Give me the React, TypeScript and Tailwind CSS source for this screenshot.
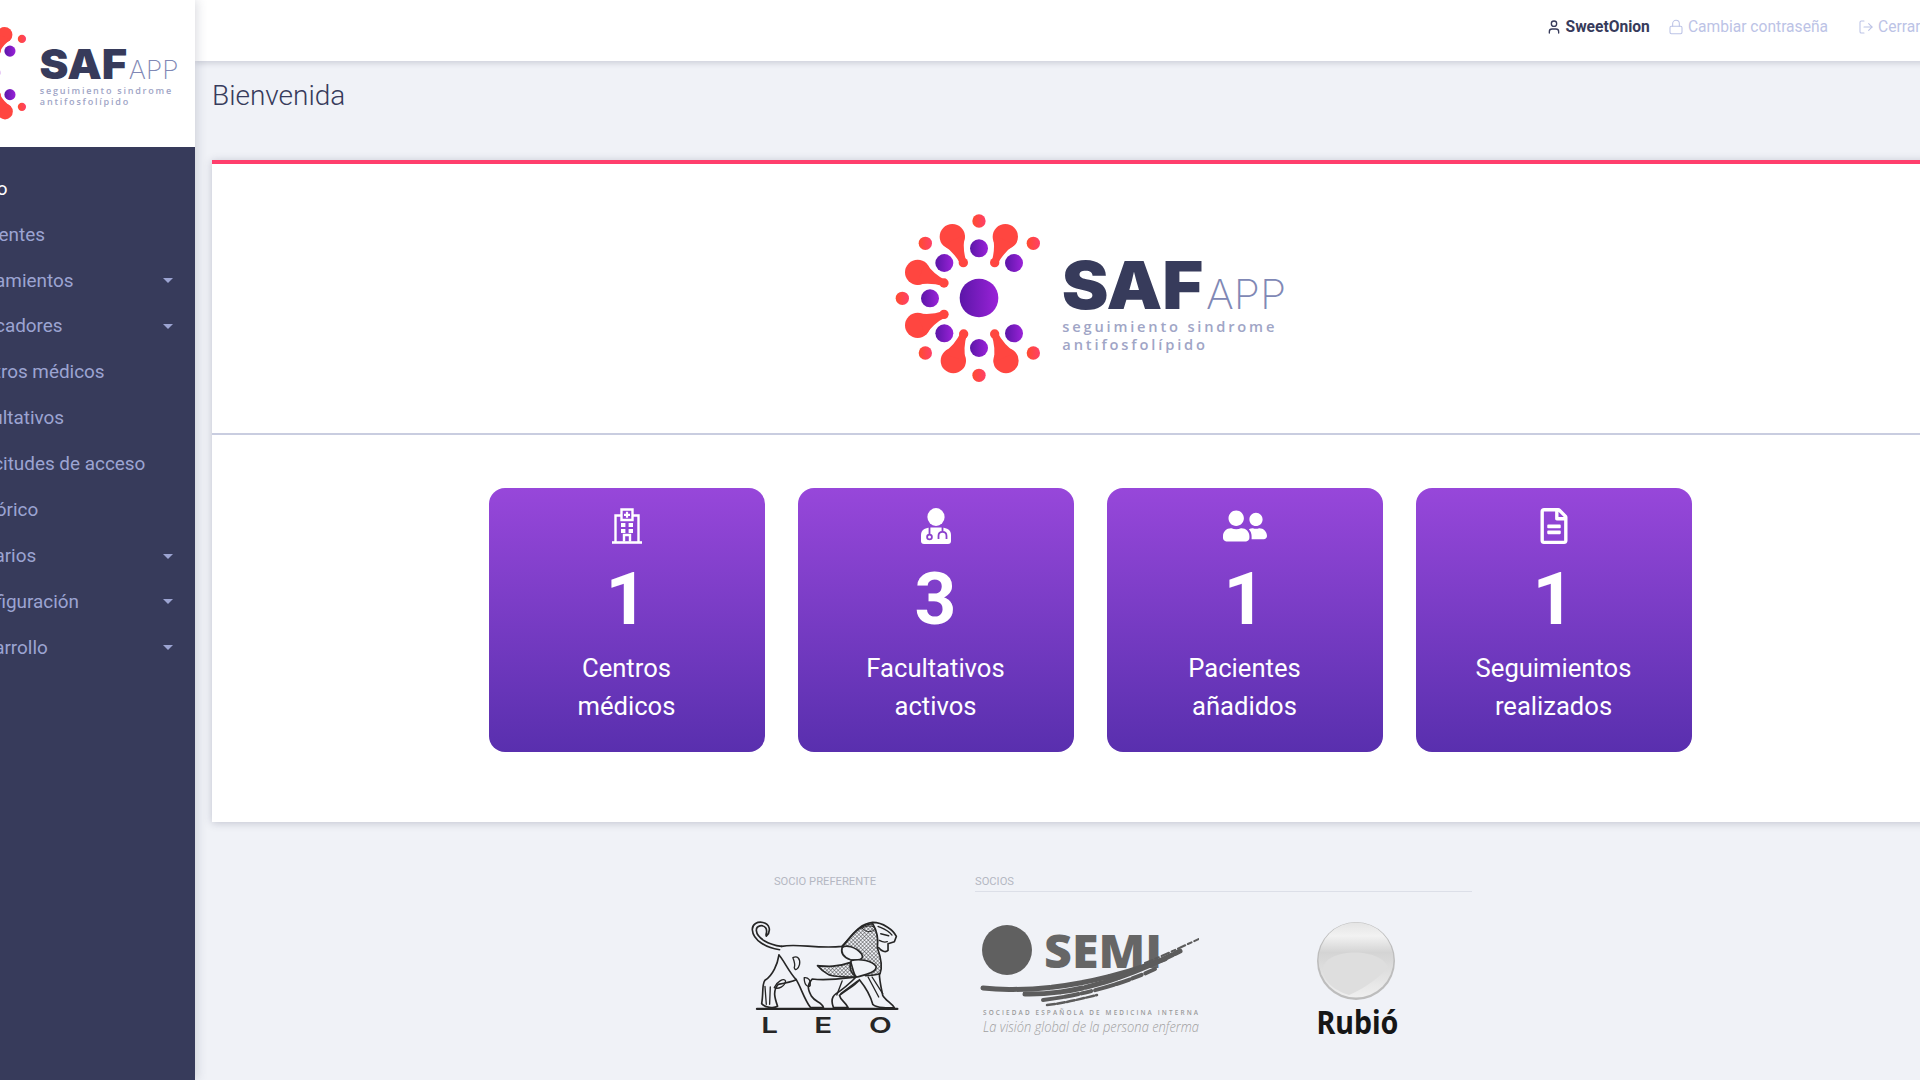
import { Lock, LogOut, User } from "lucide-react";
import { FaRegFileAlt, FaUserFriends } from "react-icons/fa";

const menu = [
  { label: "Inicio", active: true },
  { label: "Pacientes" },
  { label: "Tratamientos", caret: true },
  { label: "Marcadores", caret: true },
  { label: "Centros médicos" },
  { label: "Facultativos" },
  { label: "Solicitudes de acceso" },
  { label: "Histórico" },
  { label: "Usuarios", caret: true },
  { label: "Configuración", caret: true },
  { label: "Desarrollo", caret: true },
];

const blobs = [
  [217, 110, 250, 188],
  [376, 110, 344, 188],
  [113, 217, 192, 249],
  [113, 376, 192, 343],
  [220, 482, 251, 402],
  [378, 482, 344, 402],
];
const redDots = [
  [297, 63],
  [136, 130],
  [460, 130],
  [67, 295],
  [136, 459],
  [460, 459],
  [297, 526],
];
const purpleDots = [
  [297, 145],
  [193, 189],
  [402, 189],
  [150, 295],
  [193, 400],
  [402, 400],
  [297, 444],
];

// forma de "paleta": circulo grande, cuello y circulo pequeño
function blobPath(x1: number, y1: number, x2: number, y2: number) {
  const dx = x2 - x1;
  const dy = y2 - y1;
  const len = Math.hypot(dx, dy);
  const nx = -dy / len;
  const ny = dx / len;
  const mx = x1 + dx * 0.56;
  const my = y1 + dy * 0.56;
  const a = (s: number) => `${x1 + nx * 36 * s + dx * 0.12} ${y1 + ny * 36 * s + dy * 0.12}`;
  const b = (s: number) => `${x2 + nx * 10 * s} ${y2 + ny * 10 * s}`;
  return `M${a(1)} Q${mx + nx * 12} ${my + ny * 12} ${b(1)} L${b(-1)} Q${mx - nx * 12} ${my - ny * 12} ${a(-1)} Z`;
}

function SafLogo({ id, className }: { id: string; className: string }) {
  return (
    <svg viewBox="0 0 1260 600" className={className}>
      <defs>
        <linearGradient id={`${id}-red`} x1="0" x2="1" y1="0" y2="0">
          <stop offset="0" stopColor="#ff4b2e" />
          <stop offset="1" stopColor="#ff4068" />
        </linearGradient>
        <linearGradient id={`${id}-purple`} x1="0" x2="1" y1="0" y2="0">
          <stop offset="0" stopColor="#5b16a8" />
          <stop offset="1" stopColor="#9a22d8" />
        </linearGradient>
      </defs>
      {blobs.map(([x1, y1, x2, y2], i) => (
        <g key={i} fill="#ff4640">
          <circle cx={x1} cy={y1} r={38} />
          <circle cx={x2} cy={y2} r={14} />
          <path d={blobPath(x1, y1, x2, y2)} />
        </g>
      ))}
      {redDots.map(([x, y], i) => (
        <circle key={i} cx={x} cy={y} r={20} fill={`url(#${id}-red)`} />
      ))}
      {purpleDots.map(([x, y], i) => (
        <circle key={i} cx={x} cy={y} r={27} fill={`url(#${id}-purple)`} />
      ))}
      <circle cx={297} cy={294} r={58} fill={`url(#${id}-purple)`} />
      <text x={545} y={326} fontFamily="Inter, sans-serif" fontWeight={900} fontSize={198} fill="#373b5b" textLength={425} lengthAdjust="spacingAndGlyphs">
        SAF
      </text>
      <text x={978} y={326} fontFamily="Inter, sans-serif" fontWeight={200} fontSize={122} fill="#8088b5" textLength={240} lengthAdjust="spacingAndGlyphs">
        APP
      </text>
      <text x={547} y={397} fontFamily="'Open Sans', sans-serif" fontWeight={600} fontSize={44} fill="#a0a5c6" textLength={636}>
        seguimiento sindrome
      </text>
      <text x={547} y={450} fontFamily="'Open Sans', sans-serif" fontWeight={600} fontSize={44} fill="#a0a5c6" textLength={428}>
        antifosfolípido
      </text>
    </svg>
  );
}

function HospitalIcon() {
  return (
    <svg viewBox="0 0 32 36" className="h-[36px] w-[32px]" fill="none" stroke="white" strokeWidth="2.4">
      <path d="M1 34.5H31" strokeWidth="2.6" />
      <path d="M4.5 34V7.5H10.5M21.5 7.5H27.5V34" />
      <path d="M10.5 12V1.5H21.5V12H10.5Z" />
      <path d="M16 3.8V9.7M13 6.8H19" strokeWidth="2.2" />
      <path d="M13 33.5V27H19V33.5" />
      <g fill="white" stroke="none">
        <rect x="10" y="15" width="4.4" height="4" />
        <rect x="17.6" y="15" width="4.4" height="4" />
        <rect x="10" y="21" width="4.4" height="4" />
        <rect x="17.6" y="21" width="4.4" height="4" />
      </g>
    </svg>
  );
}

function DoctorIcon() {
  return (
    <svg viewBox="0 0 32 36" className="h-[36px] w-[32px]">
      <ellipse cx="16" cy="9" rx="8.6" ry="9" fill="white" />
      <path d="M1 33V27C1 22 5 20 10 19.5H22C27 20 31 22 31 27V33C31 35 30 36 28 36H4C2 36 1 35 1 33Z" fill="white" />
      <g fill="none" stroke="#8a40cc" strokeWidth="1.8">
        <path d="M9.5 19V26.5" />
        <circle cx="9.5" cy="29" r="2.4" />
        <path d="M22.5 19V23.5" />
        <path d="M18.5 31V28C18.5 25.5 20 23.8 22.5 23.8C25 23.8 26.5 25.5 26.5 28V31" />
      </g>
    </svg>
  );
}

function LeoLogo() {
  return (
    <svg viewBox="60 170 460 360" className="h-[120px] w-[153px]" fill="none" stroke="#262626" strokeWidth="5" strokeLinecap="round" strokeLinejoin="round">
      <defs>
        <pattern id="mane" width="8" height="8" patternUnits="userSpaceOnUse" patternTransform="rotate(45)">
          <path d="M0 0H8M0 0V8" stroke="#333" strokeWidth="2.6" />
        </pattern>
      </defs>
      {/* cola */}
      <path d="M152 268C112 262 72 240 70 208C69 190 86 183 102 186C122 190 128 212 112 227C108 222 118 214 110 202C102 192 82 194 82 210C84 234 118 252 158 258" />
      {/* lomo y cabeza */}
      <path d="M158 258C205 248 262 266 340 258C365 232 388 190 432 186C462 186 494 208 503 228L497 244L478 250L478 270C470 278 458 272 450 262" />
      {/* melena */}
      <path d="M340 258C365 232 388 192 432 190C444 210 450 232 446 262C456 290 462 320 454 340C440 345 420 345 410 346L385 300C360 298 345 285 340 258Z" fill="url(#mane)" />
      <path d="M340 262C350 252 380 258 398 280C410 300 385 300 365 298C348 292 335 280 340 262Z" fill="#f0f2f7" />
      <path d="M368 300C395 295 430 300 442 318C445 335 415 342 385 350C368 345 358 320 368 300Z" fill="#f0f2f7" />
      {/* detalle de la cara */}
      <path d="M448 198C462 204 478 208 490 224M456 220L480 226M452 240C462 246 470 246 476 244" strokeWidth="4" />
      <path d="M400 204C415 192 435 196 440 204C430 216 415 218 400 204Z" strokeWidth="3" />
      {/* ala */}
      <path d="M266 316C292 318 320 322 366 306C372 322 374 340 382 350C350 350 310 350 298 342C288 336 276 328 266 316Z" fill="url(#mane)" />
      {/* vientre y patas */}
      <path d="M150 284C146 310 132 345 108 360C98 372 104 400 98 430C108 442 135 445 146 438C138 415 130 392 148 372C170 368 188 364 202 358C218 385 225 415 245 442L284 442C280 425 258 425 248 408C238 390 232 375 250 356C300 362 360 352 382 350C360 372 345 385 322 400C304 412 310 432 314 442L358 442C350 425 335 420 332 405C350 390 380 375 392 358C410 380 425 405 432 432C445 444 480 444 497 442C488 428 470 420 462 405C458 385 452 360 452 340" />
      <path d="M150 284C165 300 180 335 202 358" />
      <path d="M192 292C205 285 215 295 212 312C208 328 198 332 196 322C200 312 196 302 192 292Z" strokeWidth="4" />
      <path d="M136 382C145 362 165 352 170 362C168 378 148 388 136 382Z" strokeWidth="4" />
      <path d="M226 352C238 350 248 362 244 376C236 382 226 374 226 352Z" strokeWidth="4" />
      <path d="M340 362L324 404M386 362L336 400M418 350L450 410M430 350L462 400" strokeWidth="4" />
      <path d="M108 378L112 432M124 380L122 432" strokeWidth="4" />
      <path d="M84 446H506" strokeWidth="7" />
      <text transform="scale(1.35 1)" x="72 190 312" y={518} fontFamily="Inter, sans-serif" fontSize={66} fontWeight={600} fill="#262626" stroke="none">
        LEO
      </text>
    </svg>
  );
}

function SemiLogo() {
  return (
    <svg viewBox="0 0 224 120" className="h-[120px] w-[224px]">
      <circle cx="32" cy="31" r="25" fill="#606060" />
      <text x="69" y="49" fontFamily="'Open Sans', sans-serif" fontWeight={800} fontSize={46} fill="#666666" textLength={118} lengthAdjust="spacingAndGlyphs">
        SEMI
      </text>
      {/* trazo de pincel */}
      <g fill="none" stroke="#5c5c5c" strokeLinecap="round">
        <path d="M8 69C60 74 120 66 190 40" strokeWidth="5" strokeDasharray="26 1 40 2 30 1" />
        <path d="M50 75C100 76 150 60 205 32" strokeWidth="5" strokeDasharray="34 2 22 3 18 2 12 3" />
        <path d="M68 81C110 76 150 64 180 50" strokeWidth="4" strokeDasharray="20 2 14 3 10 4" />
        <path d="M72 86C90 84 105 80 122 76" strokeWidth="2.5" strokeDasharray="8 2" />
        <path d="M170 44C190 36 206 28 224 20" strokeWidth="2" strokeDasharray="8 3 4 3" />
      </g>
      <text x="8" y="96" fontFamily="'Open Sans', sans-serif" fontWeight={600} fontSize={6.4} fill="#9a9a9a" textLength={215}>
        SOCIEDAD ESPAÑOLA DE MEDICINA INTERNA
      </text>
      <text x="8" y="113" fontFamily="'Open Sans', sans-serif" fontStyle="italic" fontWeight={300} fontSize={14.5} fill="#a0a0a0" textLength={216} lengthAdjust="spacingAndGlyphs">
        La visión global de la persona enferma
      </text>
    </svg>
  );
}

function RubioLogo() {
  return (
    <svg viewBox="0 0 90 120" className="h-[120px] w-[90px]">
      <defs>
        <linearGradient id="sphere" x1="0" x2="0" y1="0" y2="1">
          <stop offset="0" stopColor="#e4e4e4" />
          <stop offset="0.18" stopColor="#f2f2f2" />
          <stop offset="0.4" stopColor="#d4d4d4" />
          <stop offset="1" stopColor="#efefef" />
        </linearGradient>
      </defs>
      <circle cx="43" cy="39" r="39" fill="#bdbdbd" />
      <circle cx="43" cy="38" r="37.5" fill="url(#sphere)" />
      <path d="M10 46C12 34 32 29 50 31C64 33 72 38 75 45C66 56 52 66 36 73C20 68 9 58 10 46Z" fill="#dedede" />
      <text x="3.5" y="112" fontFamily="'Noto Sans', sans-serif" fontWeight={700} fontSize={32} fill="#161616" textLength={82} lengthAdjust="spacingAndGlyphs">
        Rubió
      </text>
    </svg>
  );
}

function StatCard({ icon, value, line1, line2 }: { icon: React.ReactNode; value: string; line1: string; line2: string }) {
  return (
    <div className="flex h-[264px] w-[276px] flex-col items-center rounded-2xl bg-gradient-to-b from-[#9747da] to-[#592fae] pt-[20px] text-white">
      <div className="flex h-[36px] items-center justify-center">{icon}</div>
      <div className="mt-[13px] text-[73px] leading-[84px] font-bold">{value}</div>
      <div className="mt-[8px] text-center text-[25.6px] leading-[38.4px]">
        {line1}
        <br />
        {line2}
      </div>
    </div>
  );
}

export default function App() {
  return (
    <div className="h-[1080px] w-[1920px] overflow-hidden bg-[#f0f2f7] font-['Roboto',sans-serif]">
      <div className="-ml-[65px] flex h-[1080px] w-[2050px]">
        <aside className="z-10 flex w-[260px] shrink-0 flex-col bg-[#373b5b] shadow-[2px_0_10px_rgba(55,59,91,0.18)]">
          <div className="flex h-[147px] items-center bg-white">
            <SafLogo id="small" className="-ml-[8px] h-[124px] w-[260px] max-w-none shrink-0" />
          </div>
          <nav className="flex flex-col pt-[19px]">
            {menu.map((item) => (
              <div key={item.label} className="flex h-[45.9px] items-center justify-between pr-[22px] pl-[27px]">
                <span className={`text-[18.9px] ${item.active ? "text-white" : "text-[#9ca4d2]"}`}>{item.label}</span>
                {item.caret && <span className="h-0 w-0 border-x-[5px] border-t-[5px] border-x-transparent border-t-[#9ca4d2]" />}
              </div>
            ))}
          </nav>
        </aside>

        <main className="flex min-w-0 flex-1 flex-col">
          <header className="flex h-[61px] shrink-0 items-start justify-end bg-white pt-[16px] pr-[15px] text-[15.6px] shadow-[0_2px_6px_rgba(55,59,91,0.2)]">
            <div className="flex items-center gap-[4px] font-bold text-[#373b5b]">
              <User size={16} strokeWidth={2} className="-translate-y-[1px]" />
              <span>SweetOnion</span>
            </div>
            <div className="ml-[18px] flex items-center gap-[4px] text-[#bcc3e6]">
              <Lock size={16} strokeWidth={1.6} className="-translate-y-[1px]" />
              <span>Cambiar contraseña</span>
            </div>
            <div className="ml-[30px] flex items-center gap-[4px] text-[#bcc3e6]">
              <LogOut size={16} strokeWidth={1.6} className="-translate-y-[1px]" />
              <span>Cerrar sesión</span>
            </div>
          </header>

          <div className="flex-1 px-[17px]">
            <h1 className="flex h-[99px] items-start pt-[18px] text-[28px] leading-[34px] font-light text-[#373b5b]">Bienvenida</h1>

            <section className="border-t-4 border-[#ff3e6c] bg-white shadow-[0_1px_8px_rgba(55,59,91,0.25)]">
              <div className="flex h-[271px] items-center justify-center border-b-2 border-[#c9cde0] pt-[3px]">
                <SafLogo id="big" className="h-[200px] w-[420px]" />
              </div>
              <div className="flex justify-center gap-[33px] pt-[53px] pb-[70px]">
                <StatCard icon={<HospitalIcon />} value="1" line1="Centros" line2="médicos" />
                <StatCard icon={<DoctorIcon />} value="3" line1="Facultativos" line2="activos" />
                <StatCard icon={<FaUserFriends size={44} />} value="1" line1="Pacientes" line2="añadidos" />
                <StatCard icon={<FaRegFileAlt size={36} />} value="1" line1="Seguimientos" line2="realizados" />
              </div>
            </section>

            <footer className="mt-[53px] ml-[523px] flex gap-[60px]">
              <div className="flex w-[180px] flex-col items-center">
                <div className="h-[17px] pt-[1px] text-[11.2px] leading-none text-[#b4b7c2]">SOCIO PREFERENTE</div>
                <div className="mt-[25px]">
                  <LeoLogo />
                </div>
              </div>
              <div className="flex w-[497px] flex-col">
                <div className="h-[17px] border-b border-[#dcdfe8] pt-[1px] text-[11.2px] leading-none text-[#b4b7c2]">SOCIOS</div>
                <div className="flex">
                  <div className="mt-[27px]">
                    <SemiLogo />
                  </div>
                  <div className="mt-[30px] ml-[114px]">
                    <RubioLogo />
                  </div>
                </div>
              </div>
            </footer>
          </div>
        </main>
      </div>
    </div>
  );
}
